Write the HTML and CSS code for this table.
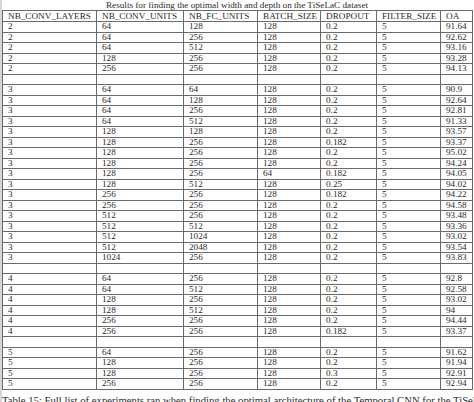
FILE: index.html
```html
<!DOCTYPE html>
<html>
<head>
<meta charset="utf-8">
<link rel="stylesheet" href="styles.css">
</head>
<body>
<div class="page">
  <div class="title">Results for finding the optimal width and depth on the TiSeLaC dataset</div>
  <table class="results">
    <colgroup>
      <col class="c1"><col class="c2"><col class="c3"><col class="c4"><col class="c5"><col class="c6"><col class="c7">
    </colgroup>
    <thead>
      <tr><th>NB_CONV_LAYERS</th><th>NB_CONV_UNITS</th><th>NB_FC_UNITS</th><th>BATCH_SIZE</th><th>DROPOUT</th><th>FILTER_SIZE</th><th>OA</th></tr>
    </thead>
    <tbody>
      <tr><td>2</td><td>64</td><td>128</td><td>128</td><td>0.2</td><td>5</td><td>91.64</td></tr>
      <tr><td>2</td><td>64</td><td>256</td><td>128</td><td>0.2</td><td>5</td><td>92.62</td></tr>
      <tr><td>2</td><td>64</td><td>512</td><td>128</td><td>0.2</td><td>5</td><td>93.16</td></tr>
      <tr><td>2</td><td>128</td><td>256</td><td>128</td><td>0.2</td><td>5</td><td>93.28</td></tr>
      <tr><td>2</td><td>256</td><td>256</td><td>128</td><td>0.2</td><td>5</td><td>94.13</td></tr>
      <tr class="blank"><td></td><td></td><td></td><td></td><td></td><td></td><td></td></tr>
      <tr><td>3</td><td>64</td><td>64</td><td>128</td><td>0.2</td><td>5</td><td>90.9</td></tr>
      <tr><td>3</td><td>64</td><td>128</td><td>128</td><td>0.2</td><td>5</td><td>92.64</td></tr>
      <tr><td>3</td><td>64</td><td>256</td><td>128</td><td>0.2</td><td>5</td><td>92.81</td></tr>
      <tr><td>3</td><td>64</td><td>512</td><td>128</td><td>0.2</td><td>5</td><td>91.33</td></tr>
      <tr><td>3</td><td>128</td><td>128</td><td>128</td><td>0.2</td><td>5</td><td>93.57</td></tr>
      <tr><td>3</td><td>128</td><td>256</td><td>128</td><td>0.182</td><td>5</td><td>93.37</td></tr>
      <tr><td>3</td><td>128</td><td>256</td><td>128</td><td>0.2</td><td>5</td><td>95.02</td></tr>
      <tr><td>3</td><td>128</td><td>256</td><td>128</td><td>0.2</td><td>5</td><td>94.24</td></tr>
      <tr><td>3</td><td>128</td><td>256</td><td>64</td><td>0.182</td><td>5</td><td>94.05</td></tr>
      <tr><td>3</td><td>128</td><td>512</td><td>128</td><td>0.25</td><td>5</td><td>94.02</td></tr>
      <tr><td>3</td><td>256</td><td>256</td><td>128</td><td>0.182</td><td>5</td><td>94.22</td></tr>
      <tr><td>3</td><td>256</td><td>256</td><td>128</td><td>0.2</td><td>5</td><td>94.58</td></tr>
      <tr><td>3</td><td>512</td><td>256</td><td>128</td><td>0.2</td><td>5</td><td>93.48</td></tr>
      <tr><td>3</td><td>512</td><td>512</td><td>128</td><td>0.2</td><td>5</td><td>93.36</td></tr>
      <tr><td>3</td><td>512</td><td>1024</td><td>128</td><td>0.2</td><td>5</td><td>93.02</td></tr>
      <tr><td>3</td><td>512</td><td>2048</td><td>128</td><td>0.2</td><td>5</td><td>93.54</td></tr>
      <tr><td>3</td><td>1024</td><td>256</td><td>128</td><td>0.2</td><td>5</td><td>93.83</td></tr>
      <tr class="blank"><td></td><td></td><td></td><td></td><td></td><td></td><td></td></tr>
      <tr><td>4</td><td>64</td><td>256</td><td>128</td><td>0.2</td><td>5</td><td>92.8</td></tr>
      <tr><td>4</td><td>64</td><td>512</td><td>128</td><td>0.2</td><td>5</td><td>92.58</td></tr>
      <tr><td>4</td><td>128</td><td>256</td><td>128</td><td>0.2</td><td>5</td><td>93.02</td></tr>
      <tr><td>4</td><td>128</td><td>512</td><td>128</td><td>0.2</td><td>5</td><td>94</td></tr>
      <tr><td>4</td><td>256</td><td>256</td><td>128</td><td>0.2</td><td>5</td><td>94.44</td></tr>
      <tr><td>4</td><td>256</td><td>256</td><td>128</td><td>0.182</td><td>5</td><td>93.37</td></tr>
      <tr class="blank"><td></td><td></td><td></td><td></td><td></td><td></td><td></td></tr>
      <tr><td>5</td><td>64</td><td>256</td><td>128</td><td>0.2</td><td>5</td><td>91.62</td></tr>
      <tr><td>5</td><td>128</td><td>256</td><td>128</td><td>0.2</td><td>5</td><td>91.94</td></tr>
      <tr><td>5</td><td>128</td><td>256</td><td>128</td><td>0.3</td><td>5</td><td>92.91</td></tr>
      <tr><td>5</td><td>256</td><td>256</td><td>128</td><td>0.2</td><td>5</td><td>92.94</td></tr>
    </tbody>
  </table>
  <p class="caption">Table 15: Full list of experiments ran when finding the optimal architecture of the Temporal CNN for the TiSeLaC dataset.</p>
</div>
</body>
</html>
```
FILE: styles.css
```css
html, body {
  margin: 0;
  padding: 0;
  background: #ffffff;
}
body {
  width: 474px;
  height: 402px;
  overflow: hidden;
  font-family: "Liberation Serif", "Times New Roman", serif;
  color: #2a2a2a;
}
.page {
  width: 474px;
  height: 402px;
  overflow: hidden;
  background: linear-gradient(to right, #d6d6d6 0, #d6d6d6 2px, #ffffff 2px);
}
.title {
  height: 10px;
  line-height: 10px;
  font-size: 9.2px;
  text-align: center;
  white-space: nowrap;
}
.results {
  margin-left: 2px;
  border-collapse: collapse;
  table-layout: fixed;
  width: 470px;
  font-size: 9.2px;
  background: #ffffff;
}
.c1 { width: 94px; }
.c2 { width: 87px; }
.c3 { width: 74px; }
.c4 { width: 63px; }
.c5 { width: 56px; }
.c6 { width: 64px; }
.c7 { width: 32px; }
.results th,
.results td {
  border: 1px solid #6a6a6a;
  height: 9.5px;
  padding: 0 0 0 5px;
  line-height: 9.5px;
  text-align: left;
  font-weight: normal;
  white-space: nowrap;
  overflow: hidden;
  vertical-align: top;
}
.results th {
  height: 10px;
  line-height: 10px;
}
.caption {
  margin: 4px 0 0 2px;
  font-size: 10.7px;
  line-height: 12px;
  white-space: nowrap;
}
```
